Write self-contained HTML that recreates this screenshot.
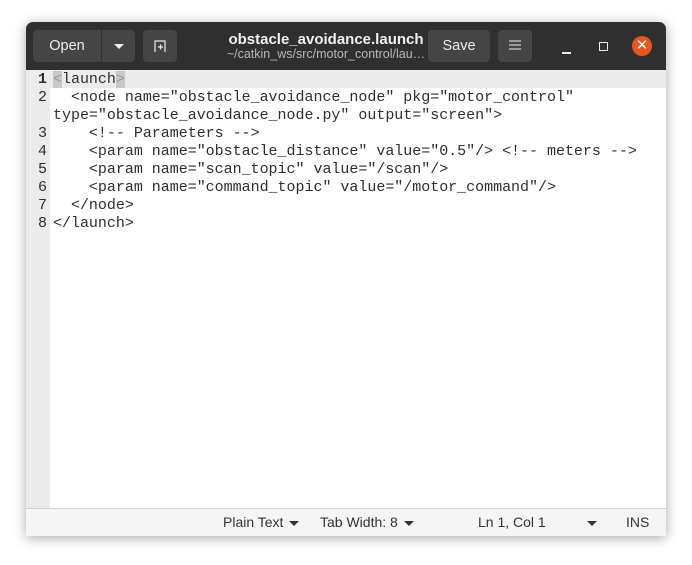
<!DOCTYPE html>
<html><head><style>
body{margin:0;width:692px;height:565px;background:#fff;position:relative;overflow:hidden;font-family:"Liberation Sans",sans-serif}
.win{position:absolute;left:26px;top:22px;width:640px;height:514px;background:#fff;border-radius:7px 7px 0 0;box-shadow:0 2px 12px rgba(0,0,0,.35);overflow:hidden}
.hdr{position:absolute;left:0;top:0;width:640px;height:48px;background:#2f2f2f}
.btn{position:absolute;top:8px;height:32px;background:#454545;border-radius:4px;color:#ececec;font-size:14.5px;line-height:32px;text-align:center}
.title{position:absolute;left:160px;width:280px;text-align:center;color:#f0f0f0}
.gut{position:absolute;left:0;top:48px;width:24px;height:438px;background:#ebebeb}
.code{position:absolute;left:0;top:49px;font-family:"Liberation Mono",monospace;font-size:15px;letter-spacing:-0.02px;line-height:18px;color:#2e2e2e;white-space:pre}
.ln{display:inline-block;width:27px;text-align:right;padding-right:6px;box-sizing:border-box}
.hl{position:absolute;left:24px;top:48px;width:616px;height:18px;background:#ebebeb}
.status{position:absolute;left:0;top:486px;width:640px;height:28px;background:#f5f5f5;border-top:1px solid #d0d0d0;font-size:14px;color:#333;line-height:27px}
.status span{position:absolute;top:0}
.tri{display:inline-block;width:0;height:0;border-left:5px solid transparent;border-right:5px solid transparent;border-top:5px solid #333;vertical-align:middle;margin-left:6px}
</style></head><body>
<div class="win">
<div class="hdr">
<div class="btn" style="left:7px;width:68px;border-radius:4px 0 0 4px">Open</div>
<div class="btn" style="left:76px;width:33px;border-radius:0 4px 4px 0"><span class="tri" style="border-top-color:#eee;margin:0"></span></div>
<div class="btn" style="left:117px;width:34px"><svg width="16" height="16" viewBox="0 0 16 16" style="margin-top:8px"><path d="M3 14V3h10v11M6 9h5M8.5 6.5v5" stroke="#eee" stroke-width="1.2" fill="none"/></svg></div>
<div class="title" style="top:9px;font-weight:bold;font-size:15px">obstacle_avoidance.launch</div>
<div class="title" style="top:25px;font-size:12.5px;color:#b8b8b8">~/catkin_ws/src/motor_control/lau…</div>
<div class="btn" style="left:402px;width:62px">Save</div>
<div class="btn" style="left:472px;width:34px"><svg width="12" height="10" viewBox="0 0 12 10"><path d="M0 1h12M0 5h12M0 9h12" stroke="#eee" stroke-width="1.1"/></svg></div>
<div style="position:absolute;left:536px;top:30px;width:9px;height:1.5px;background:#eee"></div>
<div style="position:absolute;left:573px;top:20px;width:7px;height:7px;border:1.3px solid #eee"></div>
<div style="position:absolute;left:606px;top:14px;width:20px;height:20px;border-radius:50%;background:#e95420;color:#fff;font-size:15px;line-height:20px;text-align:center">✕</div>
</div>
<div class="gut"></div>
<div class="hl"></div>
<div class="code"><span class="ln" style="font-weight:bold">1</span><span style="background:#c8c8c8;color:#999">&lt;</span>launch<span style="background:#c8c8c8;color:#999">&gt;</span>
<span class="ln">2</span>  &lt;node name="obstacle_avoidance_node" pkg="motor_control"
<span class="ln"></span>type="obstacle_avoidance_node.py" output="screen"&gt;
<span class="ln">3</span>    &lt;!-- Parameters --&gt;
<span class="ln">4</span>    &lt;param name="obstacle_distance" value="0.5"/&gt; &lt;!-- meters --&gt;
<span class="ln">5</span>    &lt;param name="scan_topic" value="/scan"/&gt;
<span class="ln">6</span>    &lt;param name="command_topic" value="/motor_command"/&gt;
<span class="ln">7</span>  &lt;/node&gt;
<span class="ln">8</span>&lt;/launch&gt;</div>
<div class="status">
<span style="left:197px">Plain Text<i class="tri"></i></span>
<span style="left:294px">Tab Width: 8<i class="tri"></i></span>
<span style="left:452px">Ln 1, Col 1</span>
<span style="left:555px"><i class="tri"></i></span>
<span style="left:600px">INS</span>
</div>
</div>
</body></html>
